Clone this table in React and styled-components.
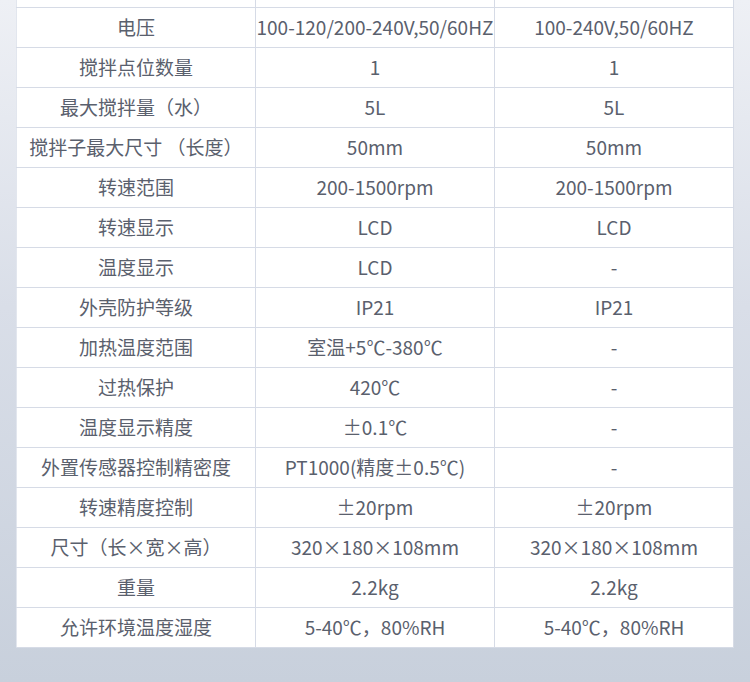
import React from "react";
import styled, { createGlobalStyle } from "styled-components";

const GlobalStyle = createGlobalStyle`
  html, body {
    margin: 0;
    padding: 0;
  }
  body {
    width: 750px;
    height: 682px;
    overflow: hidden;
    font-family: "Noto Sans CJK SC", "Noto Sans", sans-serif;
  }
`;

const rows = [
  ["电压", "100-120/200-240V,50/60HZ", "100-240V,50/60HZ"],
  ["搅拌点位数量", "1", "1"],
  ["最大搅拌量（水）", "5L", "5L"],
  ["搅拌子最大尺寸 （长度）", "50mm", "50mm"],
  ["转速范围", "200-1500rpm", "200-1500rpm"],
  ["转速显示", "LCD", "LCD"],
  ["温度显示", "LCD", "-"],
  ["外壳防护等级", "IP21", "IP21"],
  ["加热温度范围", "室温+5℃-380℃", "-"],
  ["过热保护", "420℃", "-"],
  ["温度显示精度", "±0.1℃", "-"],
  ["外置传感器控制精密度", "PT1000(精度±0.5℃)", "-"],
  ["转速精度控制", "±20rpm", "±20rpm"],
  ["尺寸（长×宽×高）", "320×180×108mm", "320×180×108mm"],
  ["重量", "2.2kg", "2.2kg"],
  ["允许环境温度湿度", "5-40℃，80%RH", "5-40℃，80%RH"],
];

const App = () => {
  return (
    <>
      <GlobalStyle />
      <Page>
        <SpecTable>
          <tbody>
            <Row $short>
              <Cell />
              <Cell />
              <Cell />
            </Row>
            {rows.map((r, i) => (
              <Row key={i}>
                {r.map((c, j) => (
                  <Cell key={j}>{c}</Cell>
                ))}
              </Row>
            ))}
          </tbody>
        </SpecTable>
      </Page>
    </>
  );
};

const Page = styled.div`
  width: 750px;
  height: 682px;
  box-sizing: border-box;
  padding: 0 16px 0 16px;
  background: linear-gradient(180deg, #eef0f5 0%, #d9dee8 45%, #c8d0dc 100%);
`;

const SpecTable = styled.table`
  width: 718px;
  border-collapse: collapse;
  table-layout: fixed;
  background: #ffffff;
`;

const Row = styled.tr`
  height: ${(p) => (p.$short ? "7px" : "40px")};
`;

const Cell = styled.td`
  border: 1px solid #d6dbe6;
  border-top: none;
  padding: 0;
  text-align: center;
  vertical-align: middle;
  font-size: 19px;
  line-height: 22px;
  color: #5a606d;
  white-space: nowrap;
  &:first-child {
    border-left: 1px solid #e2e6ee;
  }
`;

export default App;
